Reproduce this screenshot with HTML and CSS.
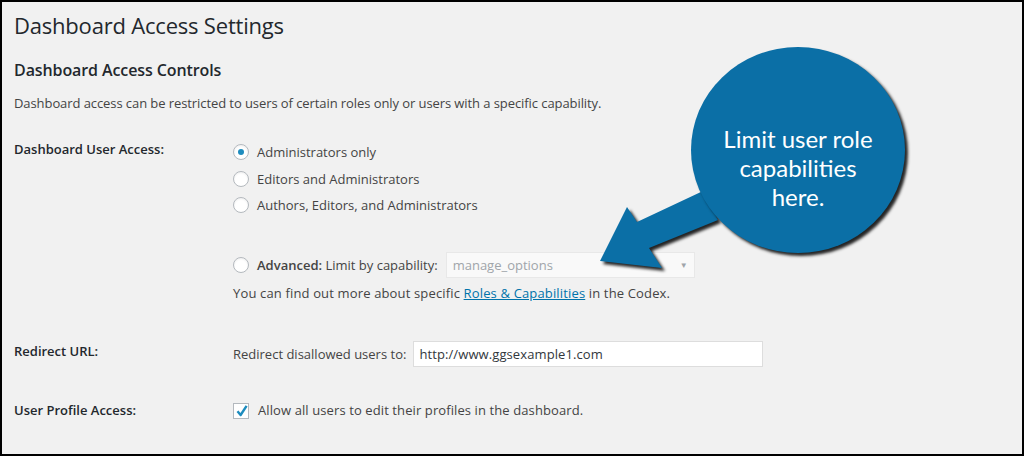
FILE: index.html
```html
<!DOCTYPE html>
<html>
<head>
<meta charset="utf-8">
<link rel="stylesheet" href="styles.css">
</head>
<body>
<div class="frame">
  <div class="wrap">
    <h1 class="title">Dashboard Access Settings</h1>
    <h2 class="subtitle">Dashboard Access Controls</h2>
    <p class="desc">Dashboard access can be restricted to users of certain roles only or users with a specific capability.</p>

    <div class="row row-access">
      <div class="th">Dashboard User Access:</div>
      <div class="td">
        <label class="opt"><span class="radio checked"></span>Administrators only</label>
        <label class="opt"><span class="radio"></span>Editors and Administrators</label>
        <label class="opt"><span class="radio"></span>Authors, Editors, and Administrators</label>
        <label class="opt adv"><span class="radio"></span><b>Advanced:</b>&nbsp;Limit by capability:
          <span class="select">manage_options<span class="caret">▼</span></span>
        </label>
        <p class="help">You can find out more about specific <a href="#">Roles &amp; Capabilities</a> in the Codex.</p>
      </div>
    </div>

    <div class="row row-redirect">
      <div class="th">Redirect URL:</div>
      <div class="td inline">
        <span class="cond">Redirect disallowed users to:</span>
        <span class="input">http://www.ggsexample1.com</span>
      </div>
    </div>

    <div class="row row-profile">
      <div class="th">User Profile Access:</div>
      <div class="td inline">
        <span class="check"><svg viewBox="0 0 16 16" width="16" height="16"><path d="M3.5 8.2 L6.6 12 L12.6 2.8" fill="none" stroke="#1e8cbe" stroke-width="2.4" stroke-linejoin="round"/></svg></span>
        <span class="cond wide">Allow all users to edit their profiles in the dashboard.</span>
      </div>
    </div>
  </div>

  <svg class="arrow" width="1024" height="456" viewBox="0 0 1024 456">
    <polygon points="600,261 627,207 637,222 703,191 718,220 649,248 662,268" fill="#0b6fa6"/>
  </svg>
  <div class="bubble">Limit user role<br>capabilities<br>here.</div>
</div>
</body>
</html>
```
FILE: styles.css
```css
* { box-sizing: border-box; }
html, body { margin: 0; padding: 0; }
body {
  width: 1024px;
  height: 456px;
  overflow: hidden;
  background: #000;
  font-family: "Open Sans", "Noto Sans", sans-serif;
}
.frame {
  position: relative;
  width: 1024px;
  height: 456px;
  border: 2px solid #000;
  background: #f1f1f1;
  color: #444;
}
.wrap {
  padding: 0 12px;
}
.title {
  margin: 9px 0 0;
  font-size: 22px;
  font-weight: 400;
  line-height: 29px;
  color: #23282d;
  letter-spacing: -0.2px;
}
.subtitle {
  margin: 18px 0 0;
  font-size: 16px;
  font-weight: 600;
  line-height: 24px;
  color: #23282d;
  letter-spacing: -0.1px;
}
.desc {
  margin: 11px 0 0;
  font-size: 13px;
  line-height: 20px;
  color: #444;
  letter-spacing: -0.08px;
}
.row {
  display: flex;
  font-size: 13px;
}
.th {
  width: 219px;
  flex: none;
  font-weight: 600;
  line-height: 20px;
  color: #23282d;
  font-size: 13px;
  letter-spacing: 0;
}
.td {
  flex: 1;
  color: #444;
  font-size: 13px;
  letter-spacing: 0;
}
.row-access { margin-top: 26px; }
.row-redirect { margin-top: 38px; }
.row-profile { margin-top: 33px; }

.opt {
  display: flex;
  align-items: center;
  height: 26.5px;
  line-height: 20px;
}
.opt b { font-weight: 600; color: #444; }
.radio {
  width: 16px;
  height: 16px;
  border: 1px solid #b4b9be;
  border-radius: 50%;
  background: #fff;
  margin-right: 8px;
  flex: none;
  display: flex;
  align-items: center;
  justify-content: center;
  box-shadow: inset 0 1px 2px rgba(0,0,0,0.07);
}
.radio.checked::after {
  content: "";
  width: 6px;
  height: 6px;
  border-radius: 50%;
  background: #1e8cbe;
}
.opt.adv {
  margin-top: 33px;
  height: 26px;
}
.select {
  position: relative;
  margin-left: 8px;
  width: 249px;
  height: 26px;
  border: 1px solid #e8e8e8;
  background: #f9f9f9;
  color: #a0a5aa;
  padding-left: 6px;
  line-height: 24px;
  display: inline-block;
}
.caret {
  position: absolute;
  right: 6px;
  top: 0;
  font-size: 8px;
  color: #a0a5aa;
}
.help {
  margin: 5px 0 0;
  line-height: 20px;
  letter-spacing: 0.15px;
}
.help a { color: #0073aa; text-decoration: underline; }
.inline {
  display: flex;
  align-items: center;
}
.row-redirect .inline { height: 26px; }
.cond { letter-spacing: 0; }
.cond.wide { letter-spacing: 0.1px; }
.input {
  margin-left: 7px;
  width: 350px;
  height: 26px;
  border: 1px solid #ddd;
  background: #fff;
  color: #32373c;
  line-height: 24px;
  padding-left: 5px;
  letter-spacing: 0.1px;
}
.row-profile .inline { height: 20px; }
.check {
  width: 16px;
  height: 16px;
  border: 1px solid #b4b9be;
  background: #fff;
  margin-right: 9px;
  flex: none;
  display: flex;
  position: relative;
  top: 1px;
}
.check svg { position: absolute; left: 0; top: -1px; }

.arrow {
  position: absolute;
  left: -2px;
  top: -2px;
  filter: drop-shadow(3px 3px 1.5px rgba(0,0,0,0.85));
}
.bubble {
  position: absolute;
  left: 689px;
  top: 45px;
  width: 214px;
  height: 206px;
  border-radius: 50%;
  background: #0b6fa6;
  box-shadow: 3px 3px 3px rgba(0,0,0,0.85);
  color: #fff;
  font-family: Lato, "Open Sans", sans-serif;
  font-size: 24px;
  line-height: 29px;
  text-align: center;
  padding-top: 77px;
}
```
